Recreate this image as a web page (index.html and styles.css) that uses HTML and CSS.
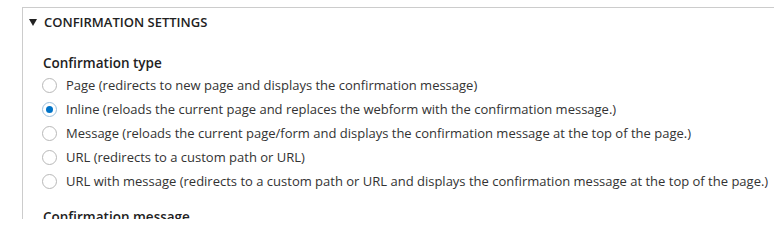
FILE: index.html
```html
<!DOCTYPE html>
<html>
<head>
<meta charset="utf-8">
<link rel="stylesheet" href="styles.css">
</head>
<body>
<div class="page">
  <section class="panel">
    <div class="summary"><span class="tri"></span><span class="title">CONFIRMATION SETTINGS</span></div>
    <div class="content">
      <div class="label">Confirmation type</div>
      <div class="options">
        <label class="opt"><span class="radio"></span>Page (redirects to new page and displays the confirmation message)</label>
        <label class="opt"><span class="radio checked"></span>Inline (reloads the current page and replaces the webform with the confirmation message.)</label>
        <label class="opt"><span class="radio"></span>Message (reloads the current page/form and displays the confirmation message at the top of the page.)</label>
        <label class="opt"><span class="radio"></span>URL (redirects to a custom path or URL)</label>
        <label class="opt"><span class="radio"></span>URL with message (redirects to a custom path or URL and displays the confirmation message at the top of the page.)</label>
      </div>
      <div class="label next">Confirmation message</div>
    </div>
  </section>
</div>
</body>
</html>
```
FILE: styles.css
```css
html, body {
  margin: 0;
  padding: 0;
  background: #fff;
  overflow: hidden;
}
body {
  font-family: "Open Sans", "Noto Sans", sans-serif;
  color: #222;
  width: 774px;
  height: 219px;
}
.page {
  padding: 7px 0 0 22px;
}
.panel {
  border-top: 1px solid #ccc;
  border-left: 1px solid #ccc;
  width: 751px;
}
.summary {
  display: flex;
  align-items: center;
  height: 28px;
  padding: 0 0 0 6px;
  gap: 7px;
}
.tri {
  width: 0;
  height: 0;
  border-left: 4px solid transparent;
  border-right: 4px solid transparent;
  border-top: 7px solid #222;
  margin-top: 1px;
}
.title {
  font-size: 13px;
  font-weight: 600;
}
.content {
  padding: 17px 0 0 19px;
}
.label {
  font-size: 13.5px;
  font-weight: 600;
  line-height: 20px;
  padding-left: 1px;
}
.options {
  display: flex;
  flex-direction: column;
}
.opt {
  display: flex;
  align-items: center;
  height: 24px;
  font-size: 13px;
  color: #333;
  gap: 9px;
}
.radio {
  box-sizing: border-box;
  width: 15px;
  height: 15px;
  border-radius: 50%;
  border: 1px solid #b8b8b8;
  background: #fff;
  flex: none;
  position: relative;
}
.radio.checked {
  border-color: #9cbfdc;
}
.radio.checked::after {
  content: "";
  position: absolute;
  left: 3px;
  top: 3px;
  width: 7px;
  height: 7px;
  border-radius: 50%;
  background: #0074c8;
}
.label.next {
  margin-top: 14px;
}
```
